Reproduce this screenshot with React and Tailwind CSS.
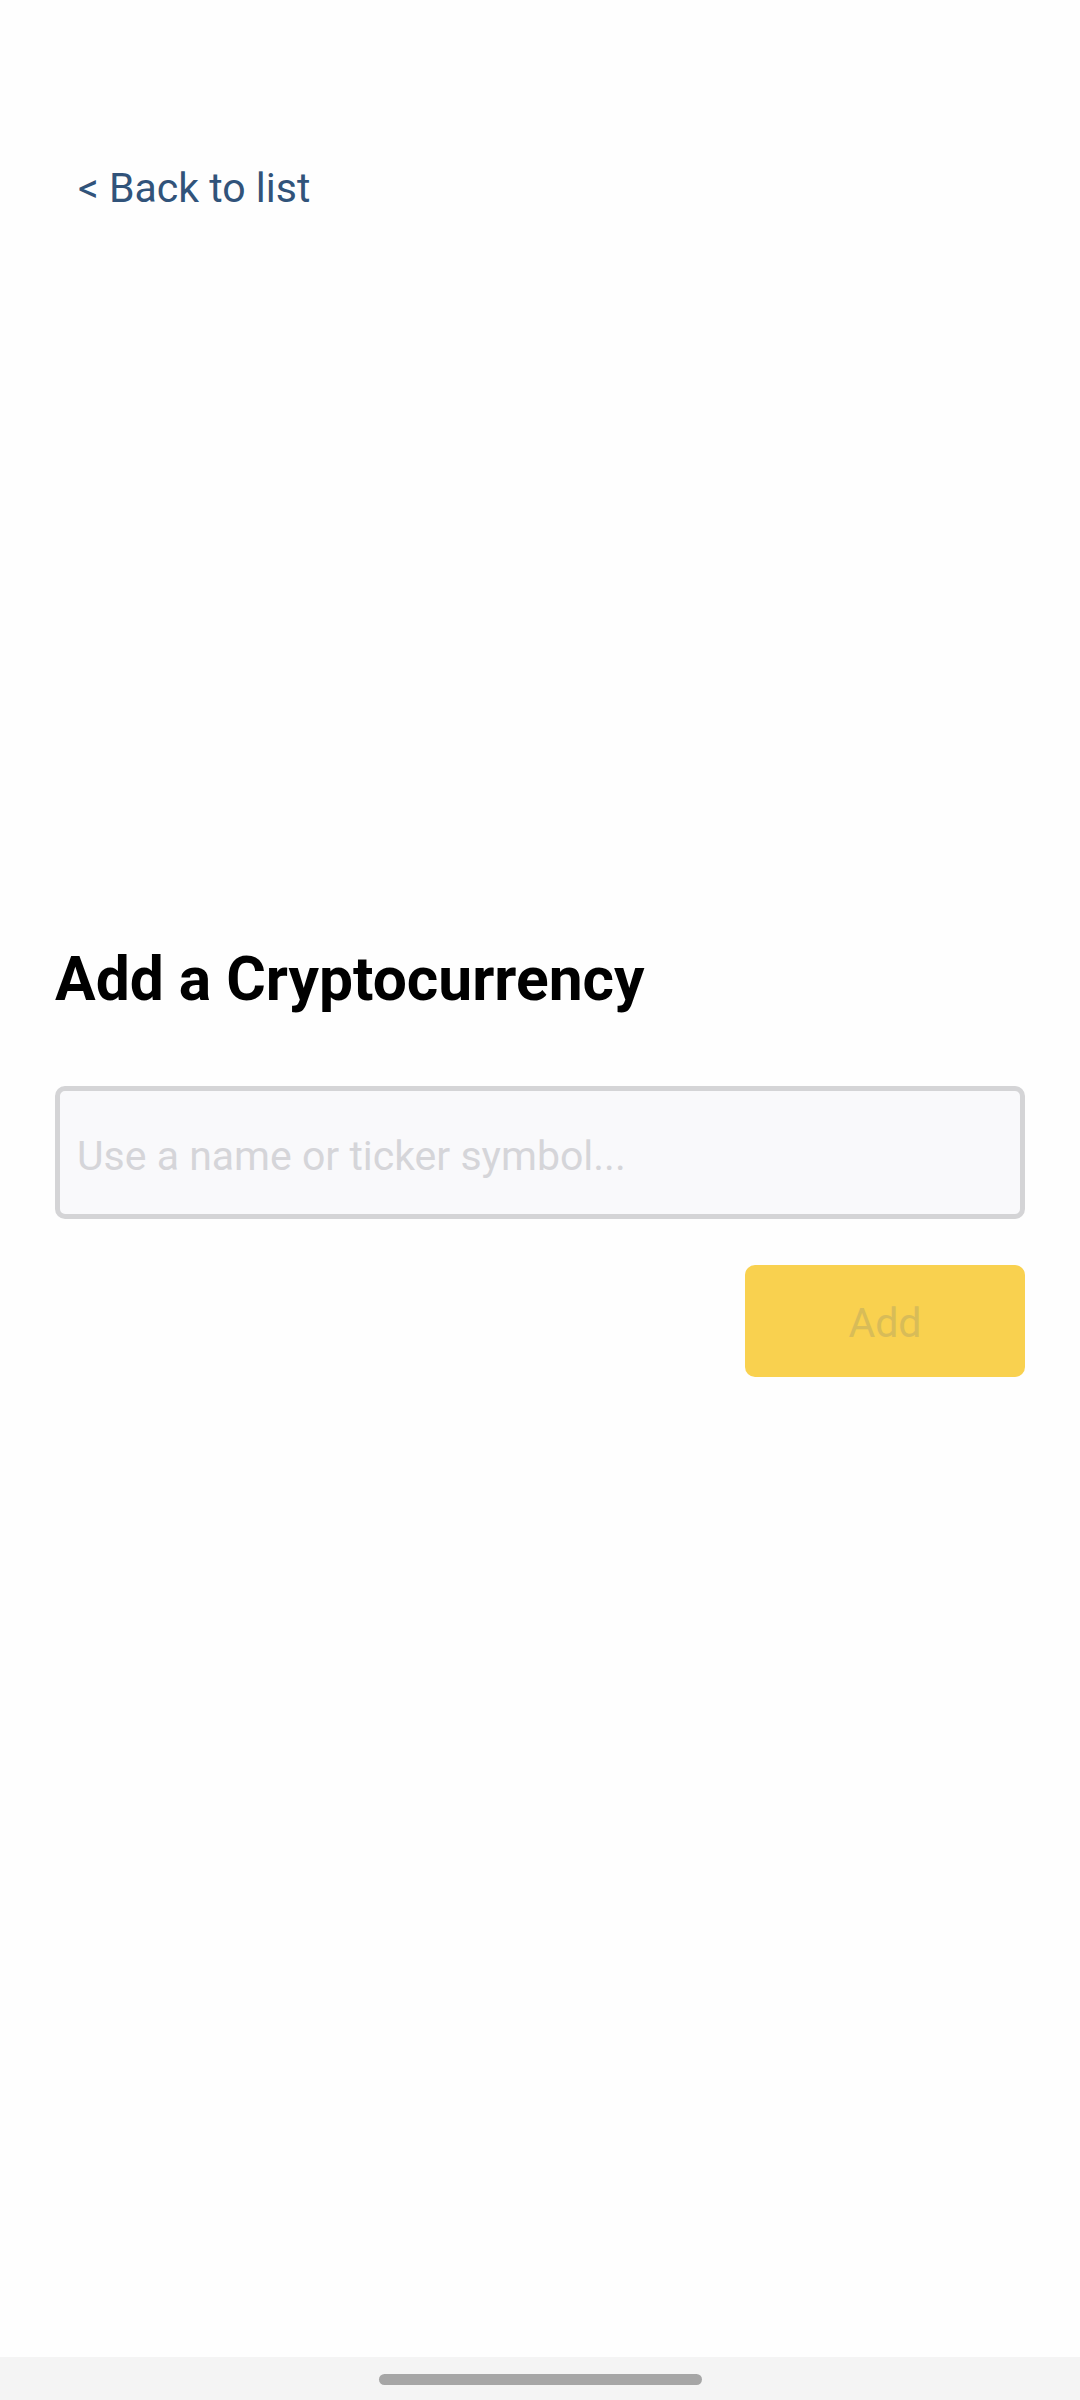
import { useState } from "react";

export default function App() {
  const [query, setQuery] = useState("");

  return (
    <div
      className="flex min-h-[2400px] w-[1080px] flex-col bg-[#fefefe]"
      style={{ fontFamily: "Roboto, 'Liberation Sans', sans-serif" }}
    >
      <main className="flex flex-1 flex-col px-[55px]">
        {/* Back link */}
        <button className="mt-[164px] self-start pl-[23px] text-left text-[41px] leading-[48px] text-[#31537a]">
          &lt; Back to list
        </button>

        {/* Title */}
        <h1 className="mt-[732px] text-[60.5px] font-bold leading-[72px] text-black">
          Add a Cryptocurrency
        </h1>

        {/* Search input */}
        <input
          value={query}
          onChange={(e) => setQuery(e.target.value)}
          placeholder="Use a name or ticker symbol..."
          className="mt-[70px] h-[133px] w-full rounded-[10px] border-[5px] border-[#d4d4d6] bg-[#f9f9fb] pt-[6px] pl-[17px] pr-[17px] text-[41px] text-[#333] outline-none placeholder:text-[#d5d5d9]"
        />

        {/* Add button */}
        <button className="mt-[46px] h-[112px] w-[280px] self-end rounded-[10px] bg-[#f9d14f] pt-[5px] text-[41px] text-[#d8bc58]">
          Add
        </button>
      </main>

      {/* Gesture bar */}
      <div className="flex h-[43px] items-start justify-center bg-[#f4f4f4] pt-[17px]">
        <div className="h-[11px] w-[323px] rounded-full bg-[#a6a6a6]" />
      </div>
    </div>
  );
}
